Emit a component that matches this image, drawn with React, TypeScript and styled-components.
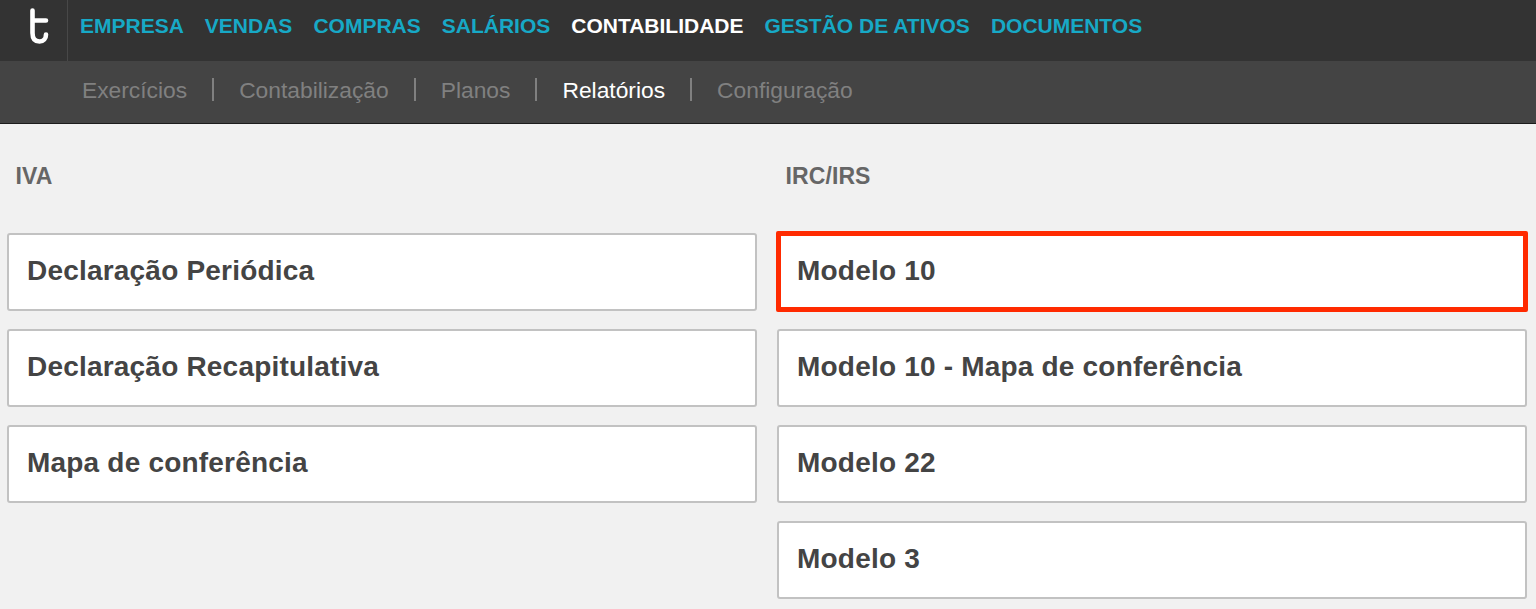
import { Fragment } from "react";
import styled, { createGlobalStyle } from "styled-components";

const GlobalStyle = createGlobalStyle`
  html, body {
    margin: 0;
    background: #f1f1f1;
    font-family: "Liberation Sans", Arial, sans-serif;
  }
  * { box-sizing: border-box; }
`;

const Page = styled.div`
  width: 1536px;
  height: 609px;
  overflow: hidden;
`;

const TopBar = styled.header`
  height: 61px;
  background: #333333;
  display: flex;
  align-items: flex-start;
`;

const LogoBox = styled.div`
  width: 68px;
  height: 61px;
  border-right: 1px solid #484848;
  padding: 7px 0 0 24px;
`;

const MainNav = styled.nav`
  display: flex;
  gap: 21px;
  padding: 13px 0 0 12px;
`;

const MainLink = styled.a<{ $active?: boolean }>`
  font-size: 21px;
  line-height: 26px;
  font-weight: 700;
  color: ${(p) => (p.$active ? "#ffffff" : "#17a9c6")};
`;

const SubBar = styled.div`
  height: 63px;
  background: #444444;
  border-bottom: 1px solid #1c1c1c;
  display: flex;
  align-items: center;
  padding: 0 0 5px 82px;
`;

const SubLink = styled.a<{ $active?: boolean }>`
  font-size: 22.8px;
  line-height: 28px;
  color: ${(p) => (p.$active ? "#ffffff" : "#808080")};
`;

const SubDivider = styled.span`
  width: 2px;
  height: 23px;
  margin: 0 25px;
  background: #808080;
`;

const Columns = styled.main`
  display: grid;
  grid-template-columns: 750px 750px;
  gap: 20px;
  padding: 39px 0 0 7px;
`;

const Column = styled.section`
  display: flex;
  flex-direction: column;
  gap: 18px;
`;

const Heading = styled.h2`
  margin: 0 0 26px 8.5px;
  font-size: 23px;
  line-height: 26px;
  font-weight: 700;
  letter-spacing: 0.1px;
  color: #666666;
`;

const Card = styled.div<{ $marked?: boolean }>`
  position: relative;
  height: 78px;
  padding: 0 0 2px 18px;
  display: flex;
  align-items: center;
  background: #ffffff;
  border: 2px solid #c2c2c2;
  border-radius: 3px;
  font-size: 28px;
  font-weight: 700;
  letter-spacing: 0.2px;
  color: #444444;

  ${(p) =>
    p.$marked &&
    `
    &::after {
      content: "";
      position: absolute;
      inset: -4px -3px -3px -3px;
      border: 5px solid #ff2a00;
      border-radius: 2px;
    }
  `}
`;

function Logo() {
  return (
    <svg width="28" height="40" viewBox="0 0 28 40" fill="none">
      <path
        d="M8.5 3.5 V26 C8.5 32 11 34.5 15.5 34.5 C19.5 34.5 22 31.5 22 27.5 M8.5 13.5 H22"
        stroke="#ffffff"
        strokeWidth="4.6"
        strokeLinecap="round"
      />
    </svg>
  );
}

const mainLinks = ["EMPRESA", "VENDAS", "COMPRAS", "SALÁRIOS", "CONTABILIDADE", "GESTÃO DE ATIVOS", "DOCUMENTOS"];
const subLinks = ["Exercícios", "Contabilização", "Planos", "Relatórios", "Configuração"];
const ivaCards = ["Declaração Periódica", "Declaração Recapitulativa", "Mapa de conferência"];
const ircCards = ["Modelo 10", "Modelo 10 - Mapa de conferência", "Modelo 22", "Modelo 3"];

export default function App() {
  return (
    <Page>
      <GlobalStyle />
      <TopBar>
        <LogoBox>
          <Logo />
        </LogoBox>
        <MainNav>
          {mainLinks.map((l) => (
            <MainLink key={l} $active={l === "CONTABILIDADE"}>{l}</MainLink>
          ))}
        </MainNav>
      </TopBar>
      <SubBar>
        {subLinks.map((l, i) => (
          <Fragment key={l}>
            {i > 0 && <SubDivider />}
            <SubLink $active={l === "Relatórios"}>{l}</SubLink>
          </Fragment>
        ))}
      </SubBar>
      <Columns>
        <Column>
          <Heading>IVA</Heading>
          {ivaCards.map((c) => (
            <Card key={c}>{c}</Card>
          ))}
        </Column>
        <Column>
          <Heading>IRC/IRS</Heading>
          {ircCards.map((c) => (
            <Card key={c} $marked={c === "Modelo 10"}>{c}</Card>
          ))}
        </Column>
      </Columns>
    </Page>
  );
}
